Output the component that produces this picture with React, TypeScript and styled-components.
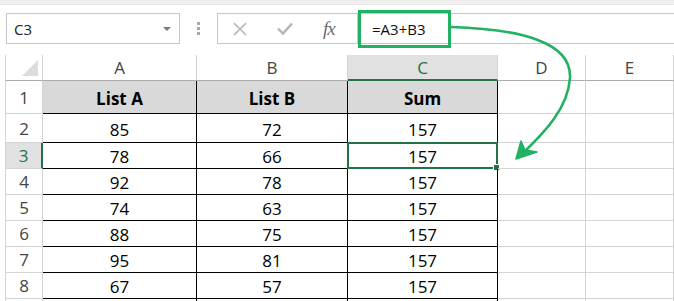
import React from "react";
import styled, { createGlobalStyle, css } from "styled-components";

const GREEN = "#217346";
const MARK = "#22b163";
const GRID = "#d4d4d4";

const GlobalStyle = createGlobalStyle`
  html, body {
    margin: 0;
    padding: 0;
    background: #ffffff;
    overflow: hidden;
  }
  body {
    font-family: "Open Sans", "Noto Sans", sans-serif;
  }
`;

const Page = styled.div`
  position: relative;
  width: 674px;
  height: 301px;
  overflow: hidden;
  background: #fff;
`;

const TopStrip = styled.div`
  height: 4px;
  background: linear-gradient(#ebebeb, #f4f4f4);
  border-bottom: 1px solid #e6e6e6;
`;

/* formula bar */
const FormulaBar = styled.div`
  display: flex;
  align-items: stretch;
  height: 31px;
  margin-top: 8px;
  padding-left: 6px;
`;

const NameBox = styled.div`
  box-sizing: border-box;
  width: 174px;
  display: flex;
  align-items: center;
  justify-content: space-between;
  padding: 0 8px 0 7px;
  border: 1px solid #c6c6c6;
  font-size: 15px;
  color: #222;
`;

const DropArrow = styled.span`
  width: 0;
  height: 0;
  border-left: 4px solid transparent;
  border-right: 4px solid transparent;
  border-top: 4px solid #7a7a7a;
`;

const Grip = styled.div`
  width: 37px;
  display: flex;
  flex-direction: column;
  align-items: center;
  justify-content: center;
  gap: 2px;

  span {
    width: 3px;
    height: 3px;
    background: #a8a8a8;
  }
`;

const FxBox = styled.div`
  box-sizing: border-box;
  width: 141px;
  display: flex;
  align-items: center;
  padding-left: 15px;
  gap: 30px;
  border: 1px solid #c6c6c6;
  color: #b0b0b0;
`;

const FxLabel = styled.span`
  font-family: "Liberation Serif", "DejaVu Serif", serif;
  font-style: italic;
  font-size: 19px;
  color: #6e6e6e;
  letter-spacing: -1px;
`;

const FormulaInput = styled.div`
  flex: 1;
  display: flex;
  align-items: center;
  padding-left: 14px;
  border-top: 1px solid #c6c6c6;
  border-bottom: 1px solid #c6c6c6;
  font-size: 15px;
  color: #111;
`;

/* sheet grid */
const Sheet = styled.div`
  display: grid;
  grid-template-columns: 38px 154px 151px 150px 88px 88px 40px;
  grid-template-rows: 26px 33px 29px 26px repeat(6, 26px);
  margin-top: 11px;
  margin-left: 5px;
`;

type CellProps = {
  $right?: string;
  $bottom?: string;
  $fill?: string;
};

const Cell = styled.div<CellProps>`
  box-sizing: border-box;
  display: flex;
  align-items: center;
  justify-content: center;
  position: relative;
  padding-top: 2px;
  border-right: 1px solid ${(p) => p.$right || GRID};
  border-bottom: 1px solid ${(p) => p.$bottom || GRID};
  background: ${(p) => p.$fill || "transparent"};
  font-family: "Open Sans", "Noto Sans", sans-serif;
  font-size: 17px;
  color: #000;
`;

const HeadCell = styled(Cell)<{ $active?: boolean }>`
  color: #444;
  font-size: 17px;
  padding-top: 0;
  ${(p) =>
    p.$active &&
    css`
      background: #e1e1e1;
      color: ${GREEN};
      border-bottom: 2px solid ${GREEN};
    `}
`;

const RowHead = styled(Cell)<{ $active?: boolean }>`
  border-left: 1px solid ${GRID};
  color: #444;
  padding-top: 0;
  ${(p) =>
    p.$active &&
    css`
      background: #e1e1e1;
      color: ${GREEN};
      border-right: 2px solid ${GREEN};
    `}
`;

const Corner = styled(Cell)`
  border-left: 1px solid ${GRID};
  border-bottom-color: #ababab;

  &::after {
    content: "";
    position: absolute;
    right: 4px;
    bottom: 4px;
    width: 0;
    height: 0;
    border-left: 16px solid transparent;
    border-bottom: 16px solid #dcdcdc;
  }
`;

const Title = styled.span`
  font-weight: 700;
`;

const Selected = styled.div`
  position: absolute;
  left: -1px;
  top: -1px;
  right: -1px;
  bottom: -1px;
  border: 2px solid ${GREEN};
  pointer-events: none;

  &::after {
    content: "";
    position: absolute;
    right: -4px;
    bottom: -4px;
    width: 5px;
    height: 5px;
    background: ${GREEN};
    border: 1px solid #fff;
  }
`;

const Overlay = styled.svg`
  position: absolute;
  left: 0;
  top: 0;
  pointer-events: none;
`;

// last row only peeks in at the bottom edge, so it stays empty
const data: ([number, number, number] | null)[] = [
  [85, 72, 157],
  [78, 66, 157],
  [92, 78, 157],
  [74, 63, 157],
  [88, 75, 157],
  [95, 81, 157],
  [67, 57, 157],
  null,
];

const cols = ["A", "B", "C", "D", "E", ""];

const CrossIcon = () => (
  <svg width="14" height="14" viewBox="0 0 14 14">
    <path d="M1 1 L13 13 M13 1 L1 13" stroke="#b4b4b4" strokeWidth="1.6" fill="none" />
  </svg>
);

const CheckIcon = () => (
  <svg width="16" height="13" viewBox="0 0 16 13">
    <path d="M1 6.5 L6 11.5 L15 1.5" stroke="#b4b4b4" strokeWidth="2.4" fill="none" />
  </svg>
);

export default function App() {
  return (
    <Page>
      <GlobalStyle />
      <TopStrip />
      <FormulaBar>
        <NameBox>
          C3
          <DropArrow />
        </NameBox>
        <Grip>
          <span />
          <span />
          <span />
        </Grip>
        <FxBox>
          <CrossIcon />
          <CheckIcon />
          <FxLabel>fx</FxLabel>
        </FxBox>
        <FormulaInput>=A3+B3</FormulaInput>
      </FormulaBar>

      <Sheet>
        <Corner />
        {cols.map((c) => (
          <HeadCell key={c || "f"} $bottom="#ababab" $active={c === "C"}>
            {c}
          </HeadCell>
        ))}

        <RowHead>1</RowHead>
        <Cell $right="#000" $bottom="#000" $fill="#d9d9d9">
          <Title>List A</Title>
        </Cell>
        <Cell $right="#000" $bottom="#000" $fill="#d9d9d9">
          <Title>List B</Title>
        </Cell>
        <Cell $right="#000" $bottom="#000" $fill="#d9d9d9">
          <Title>Sum</Title>
        </Cell>
        <Cell />
        <Cell />
        <Cell />

        {data.map((row, i) => {
          const n = i + 2;
          return (
            <React.Fragment key={n}>
              <RowHead $active={n === 3}>{row ? n : ""}</RowHead>
              {[0, 1, 2].map((j) => (
                <Cell key={j} $right="#000" $bottom="#000">
                  {row ? row[j] : ""}
                  {n === 3 && j === 2 && <Selected />}
                </Cell>
              ))}
              <Cell />
              <Cell />
              <Cell />
            </React.Fragment>
          );
        })}
      </Sheet>

      <Overlay width="674" height="301" viewBox="0 0 674 301">
        <rect x="359.5" y="11.5" width="90" height="35" fill="none" stroke={MARK} strokeWidth="3" />
        <path
          d="M451 27 C 520 29, 572 42, 570 78 C 568 108, 545 132, 522 154"
          fill="none"
          stroke={MARK}
          strokeWidth="2.6"
          strokeLinecap="round"
        />
        <polygon points="516,159 521,141 525,150 537,152" fill={MARK} stroke={MARK} strokeWidth="1.5" strokeLinejoin="round" />
      </Overlay>
    </Page>
  );
}
